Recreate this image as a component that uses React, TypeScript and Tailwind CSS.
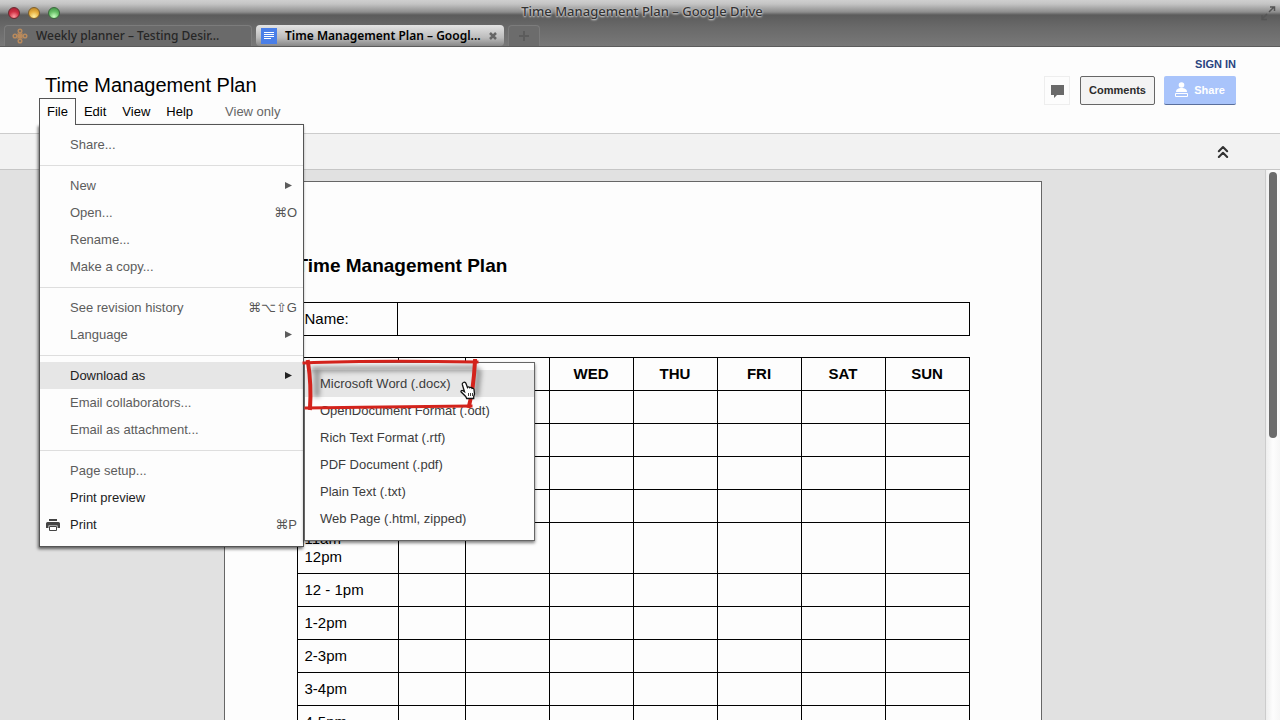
import React from "react";
import { ChevronsUp } from "lucide-react";

type MenuEntry = {
  label: string;
  shortcut?: string;
  submenu?: boolean;
  active?: boolean;
  enabled?: boolean;
  icon?: boolean;
};

const fileMenu: MenuEntry[][] = [
  [{ label: "Share..." }],
  [
    { label: "New", submenu: true },
    { label: "Open...", shortcut: "⌘O" },
    { label: "Rename..." },
    { label: "Make a copy..." },
  ],
  [
    { label: "See revision history", shortcut: "⌘⌥⇧G" },
    { label: "Language", submenu: true },
  ],
  [
    { label: "Download as", submenu: true, active: true, enabled: true },
    { label: "Email collaborators..." },
    { label: "Email as attachment..." },
  ],
  [
    { label: "Page setup..." },
    { label: "Print preview", enabled: true },
    { label: "Print", shortcut: "⌘P", enabled: true, icon: true },
  ],
];

const downloadFormats = [
  "Microsoft Word (.docx)",
  "OpenDocument Format (.odt)",
  "Rich Text Format (.rtf)",
  "PDF Document (.pdf)",
  "Plain Text (.txt)",
  "Web Page (.html, zipped)",
];

const days = ["MON", "TUE", "WED", "THU", "FRI", "SAT", "SUN"];

const hours = [
  "7-8am",
  "8-9am",
  "9-10am",
  "10-11am",
  "11am - 12pm",
  "12 - 1pm",
  "1-2pm",
  "2-3pm",
  "3-4pm",
  "4-5pm",
];

const PrinterIcon = () => (
  <svg className="absolute left-[6px] h-3 w-[14px]" viewBox="0 0 14 12" fill="#444">
    <rect x="3" y="0" width="8" height="2" />
    <path d="M1.5 3h11A1.5 1.5 0 0 1 14 4.500V9h-2.500V6.500h-9V9H0V4.500A1.500 1.500 0 0 1 1.500 3z" />
    <path d="M3.500 7.500h7v4h-7z" fill="#fff" stroke="#444" />
  </svg>
);

const DocIcon = () => (
  <svg className="h-4 w-4 shrink-0" viewBox="0 0 16 16">
    <rect width="16" height="16" fill="#4a7fe8" />
    <path d="M3 4.500h10M3 6.500h10M3 8.500h10M3 10.500h7" stroke="#fff" />
  </svg>
);

const PlannerIcon = () => (
  <svg className="h-4 w-4 shrink-0" viewBox="0 0 16 16" fill="none" stroke="#b98a5c" strokeWidth="1.500">
    <circle cx="8" cy="3" r="1.800" />
    <circle cx="3" cy="8" r="1.800" />
    <circle cx="13" cy="8" r="1.800" />
    <circle cx="8" cy="13" r="1.800" />
    <path d="M8 5v6M5 8h6M5.500 5.500l5 5M10.500 5.500l-5 5" />
  </svg>
);

const WindowChrome = () => (
  <div className="flex h-[47px] shrink-0 flex-col border-b border-[#5c5c5c] bg-[linear-gradient(#cfcfcf_0px,#c4c4c4_4px,#8e8e8e_12px,#5c5c5c_15px,#6a6a6a_28px,#787878_46px)] font-['Noto_Sans','Open_Sans',sans-serif]">
    <div className="grid h-[25px] shrink-0 grid-cols-[1fr_auto_1fr] items-center pl-2 pr-1">
      <div className="flex gap-2">
        <button aria-label="Close" className="h-3 w-3 rounded-full border border-[#6b2a30] bg-[radial-gradient(circle_at_50%_85%,#ff9aa0,#cf3044_50%,#9e1b30)]" />
        <button aria-label="Minimize" className="h-3 w-3 rounded-full border border-[#80602a] bg-[radial-gradient(circle_at_50%_85%,#fff0a0,#e8b040_50%,#b07a20)]" />
        <button aria-label="Zoom" className="h-3 w-3 rounded-full border border-[#3a6a3c] bg-[radial-gradient(circle_at_50%_85%,#c8ffc0,#68c068_50%,#3a8a40)]" />
      </div>
      <div className="pb-1 text-[13px] leading-5 font-medium text-[#333] [text-shadow:0_1px_2px_#e4e4e4,0_0_2px_#ccc]">
        Time Management Plan – Google Drive
      </div>
      <button aria-label="Full screen" className="justify-self-end">
        <svg className="h-4 w-4" viewBox="0 0 16 16" fill="none" stroke="#555" strokeWidth="1.500">
          <path d="M9 7l5-5M10 2h4.500v4M7 9l-5 5M2 10v4.500h5" />
        </svg>
      </button>
    </div>

    <div className="flex min-h-0 flex-1 items-stretch gap-1 pl-1 text-xs">
      <a href="#planner" className="flex w-[248px] items-center gap-2 rounded-t border border-b-0 border-[#7c7c7c] bg-[#6a6a6a] px-[7px] font-medium text-[#262626]">
        <PlannerIcon />
        <span className="flex-1 whitespace-nowrap">Weekly planner – Testing Desir...</span>
      </a>
      <a href="#plan" className="flex w-[248px] items-center gap-2 rounded bg-[linear-gradient(#e4e4e4,#bcbcbc_60%,#888)] px-[5px] font-semibold text-black">
        <DocIcon />
        <span className="flex-1 whitespace-nowrap">Time Management Plan – Googl...</span>
        <svg className="mr-1 h-2 w-2 shrink-0" viewBox="0 0 8 8" stroke="#666" strokeWidth="2.500">
          <path d="M1 1l6 6M7 1l-6 6" />
        </svg>
      </a>
      <button aria-label="New tab" className="flex w-8 items-center justify-center rounded-t border border-b-0 border-[#7c7c7c] bg-[#6c6c6c]">
        <svg className="h-[10px] w-[10px]" viewBox="0 0 10 10" stroke="#5c5c5c" strokeWidth="2">
          <path d="M5 0v10M0 5h10" />
        </svg>
      </button>
    </div>
  </div>
);

// Hand-drawn highlight and pointer on top of the first download format
const Annotation = () => (
  <svg className="pointer-events-none absolute -left-1 -top-2 h-16 w-48" viewBox="0 0 192 64" fill="none">
    <defs>
      <filter id="soft" x="-10%" y="-20%" width="120%" height="140%">
        <feGaussianBlur stdDeviation="2.500" />
      </filter>
    </defs>
    <path d="M10 14L176 13M16 16L16 42M178 14L175 42" stroke="#000" strokeOpacity=".4" strokeWidth="5" filter="url(#soft)" />
    <g stroke="#d3231c" strokeLinecap="square">
      <path d="M3 8C50 6 110 6 176 7" strokeWidth="3" />
      <path d="M7 7C9 20 10 38 9 53" strokeWidth="4" />
      <path d="M174 6C173 24 171 40 168 51" strokeWidth="4" />
      <path d="M5 53C60 52 120 52 170 51" strokeWidth="3" />
    </g>
    <g transform="translate(-2 -2)">
      <path
        d="M164.500 29.500c1-.8 2 0 2.500 1l1.500 4c.6-1 2-.8 2.300.2.800-.6 2-.3 2.200.7.900-.4 2 .2 2 1.200l.5 4.400-.8 2.500v2h-7l-1-2-4.500-4.500c-.8-1 .5-2.200 1.800-1.200l1.500 1-2.200-7.300c-.2-.8.3-1.700 1.200-2z"
        fill="#fff"
        stroke="#111"
        strokeWidth="1.300"
      />
      <path d="M169.500 40v3M171.500 40v3M173.500 40v3" stroke="#111" strokeWidth=".8" />
    </g>
  </svg>
);

const DownloadMenu = () => (
  <div className="absolute left-full top-0 z-10 ml-px w-[231px] border border-[#666] bg-[#fdfdfd] pb-2 pt-[7px] shadow-[0_2px_3px_rgba(0,0,0,0.5)]">
    <ul>
      {downloadFormats.map((format, i) => (
        <li key={format}>
          <button
            className={`flex h-[27px] w-full items-center px-[15px] text-[#3c3c3c] ${i === 0 ? "bg-[#e6e6e6]" : ""}`}
          >
            {format}
          </button>
        </li>
      ))}
    </ul>
    <Annotation />
  </div>
);

const FileMenu = () => (
  <div className="absolute left-0 top-[26px] w-[265px] border border-[#555] bg-[#fdfdfd] pb-2 pt-[6px] shadow-[-1px_2px_3px_rgba(0,0,0,0.6)]">
    {fileMenu.map((group, i) => (
      <ul key={i} className={i > 0 ? "mt-[7px] border-t border-[#dedede] pt-[6px]" : ""}>
        {group.map((item) => (
          <li key={item.label} className="relative">
            <button
              className={`flex h-[27px] w-full items-center justify-between pl-[30px] pr-[6px] ${
                item.active ? "bg-[#e6e6e6]" : ""
              } ${item.enabled ? "text-[#222]" : "text-[#5c5c5c]"}`}
            >
              {item.icon && <PrinterIcon />}
              <span>{item.label}</span>
              {item.shortcut && <span className="text-[#555]">{item.shortcut}</span>}
              {item.submenu && (
                <svg className="mr-[5px] h-[7px] w-[7px]" viewBox="0 0 7 7" fill="currentColor">
                  <path d="M0 0l7 3.500L0 7z" />
                </svg>
              )}
            </button>
            {item.active && <DownloadMenu />}
          </li>
        ))}
      </ul>
    ))}
  </div>
);

const Header = () => (
  <header className="relative z-10 flex shrink-0 justify-between border-b border-[#ccc] bg-[#fdfdfd] pb-2 pl-[39px] pr-11">
    <div className="pt-[26px]">
      <h1 className="h-[25px] pl-[6px] text-xl leading-6 text-black">Time Management Plan</h1>
      <nav className="flex h-[27px] items-stretch text-black">
        <div className="relative">
          <button className="relative z-10 h-full border border-b-0 border-[#555] bg-[#fdfdfd] px-[7px]">File</button>
          <FileMenu />
        </div>
        <button className="px-2">Edit</button>
        <button className="px-2">View</button>
        <button className="px-2">Help</button>
        <span className="self-center pl-6 text-[#666]">View only</span>
      </nav>
    </div>

    <div className="flex flex-col items-end pt-[9px]">
      <a href="#signin" className="text-[11px] leading-4 font-bold text-[#2a4480]">
        SIGN IN
      </a>
      <div className="mt-1 flex items-center text-[11px] font-bold">
        <button aria-label="Open comments" className="flex h-[29px] w-[26px] items-center justify-center border border-[#eee]">
          <svg className="h-[14px] w-[13px]" viewBox="0 0 13 14" fill="#6a6a6a">
            <path d="M0 1h13v10H6l-3 3v-3H0z" />
          </svg>
        </button>
        <button className="ml-[10px] h-[29px] w-[75px] rounded-xs border border-[#666] bg-[#f3f3f3] text-[#2c2c2c]">
          Comments
        </button>
        <button className="ml-[9px] flex h-[29px] w-[72px] items-center justify-center gap-[6px] rounded-xs border-b border-[#5a6f9c] bg-[#a9c4fb] text-white">
          <svg className="h-4 w-[13px]" viewBox="0 0 13 16" fill="#fff">
            <circle cx="6.500" cy="3" r="2.800" />
            <path d="M1 10c0-3 2.500-4 5.500-4s5.500 1 5.500 4z" />
            <path d="M.5 11.500h12v3H.5z" fill="none" stroke="#fff" />
          </svg>
          Share
        </button>
      </div>
    </div>
  </header>
);

const App: React.FC = () => {
  return (
    <div className="flex h-screen flex-col overflow-hidden bg-[#e1e1e1] font-['Liberation_Sans','DejaVu_Sans',sans-serif] text-[13px]">
      <WindowChrome />
      <Header />

      <div className="flex h-9 shrink-0 items-center justify-end border-b border-[#c6c6c6] bg-[#f2f2f2] pr-[47px]">
        <button aria-label="Hide the menus">
          <ChevronsUp className="h-5 w-5 text-[#333]" strokeWidth={2.5} />
        </button>
      </div>

      <div className="flex min-h-0 flex-1">
        <main className="min-w-0 flex-1 overflow-hidden pt-[11px]">
          <article className="mx-auto w-[818px] border border-[#666] bg-[#fdfdfd] pl-[72px] pr-[71px] pt-[72px] text-[15px] text-black">
            <h2 className="h-[48px] text-[19px] leading-6 font-bold">Time Management Plan</h2>

            <table className="w-full table-fixed border-collapse">
              <tbody>
                <tr className="h-[33px]">
                  <th scope="row" className="w-[100px] border border-black pl-[7px] text-left font-normal">
                    Name:
                  </th>
                  <td className="border border-black" />
                </tr>
              </tbody>
            </table>

            <table className="mt-[21px] w-full table-fixed border-collapse">
              <thead>
                <tr className="h-[33px]">
                  <th className="w-[101px] border border-black">TIME</th>
                  {days.map((day) => (
                    <th
                      key={day}
                      className={`border border-black ${day === "MON" ? "w-[67px]" : ""}`}
                    >
                      {day}
                    </th>
                  ))}
                </tr>
              </thead>
              <tbody>
                {hours.map((hour) => (
                  <tr key={hour} className="h-[33px]">
                    <th scope="row" className="border border-black py-[7px] pl-[7px] pr-4 text-left leading-[18px] font-normal">
                      {hour}
                    </th>
                    {days.map((day) => (
                      <td key={day} className="border border-black" />
                    ))}
                  </tr>
                ))}
              </tbody>
            </table>
          </article>
        </main>

        <div className="w-[15px] shrink-0 border-l border-[#ccc] bg-[linear-gradient(90deg,#eee,#fdfdfd_50%,#f6f6f6)] px-[3px] pt-[2px]">
          <div className="h-[266px] w-2 rounded-full bg-[#6a6a6a]" />
        </div>
      </div>
    </div>
  );
};

export default App;
